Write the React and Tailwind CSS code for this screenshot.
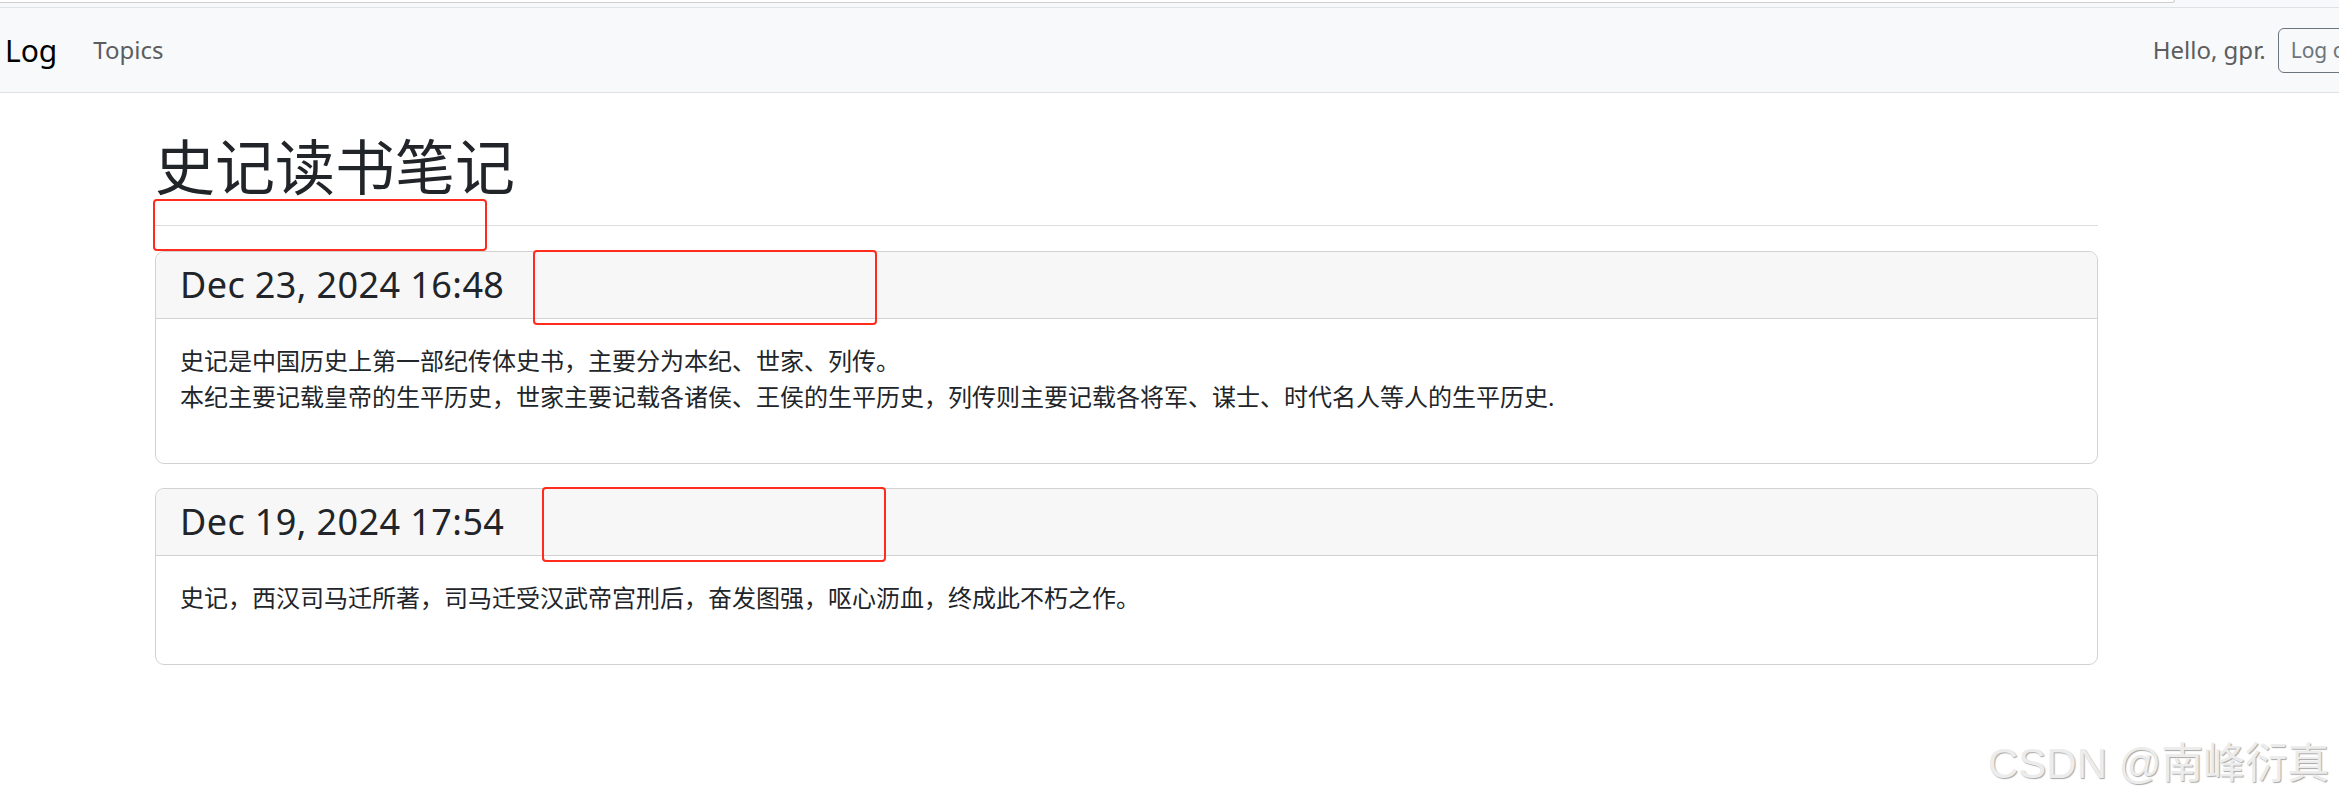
const font = "font-['Noto_Sans','Noto_Sans_CJK_SC',sans-serif]"

const entries = [
  {
    id: 1,
    date: 'Dec 23, 2024 16:48',
    lines: [
      '史记是中国历史上第一部纪传体史书，主要分为本纪、世家、列传。',
      '本纪主要记载皇帝的生平历史，世家主要记载各诸侯、王侯的生平历史，列传则主要记载各将军、谋士、时代名人等人的生平历史.',
    ],
    mark: 'left-[377px] w-[344px]',
  },
  {
    id: 2,
    date: 'Dec 19, 2024 17:54',
    lines: [
      '史记，西汉司马迁所著，司马迁受汉武帝宫刑后，奋发图强，呕心沥血，终成此不朽之作。',
    ],
    mark: 'left-[386px] w-[344px]',
  },
]

function Navbar() {
  return (
    <div>
      <div className="h-[7px] bg-[#f8f9fa]">
        <div className="h-[3px] w-[2175px] rounded-br-[8px] border-r border-b border-[#cfcfcf] bg-white" />
      </div>
      <nav className="flex h-[86px] items-center border-t border-b border-[#dee2e6] bg-[#f8f9fa]">
        <a className="ml-[5px] mr-[24px] text-[30px] leading-[45px] text-black">
          Log
        </a>
        <a className="px-[12px] text-[24px] leading-[36px] text-[#5c5d5e]">
          Topics
        </a>

        {/* the log out button runs off the right edge, as in the screenshot */}
        <div className="ml-auto mr-[-40px] flex shrink-0 items-center gap-[12px]">
          <span className="whitespace-nowrap text-[24px] leading-[36px] text-[#5c5d5e]">
            Hello, gpr.
          </span>
          <button className="h-[45px] whitespace-nowrap rounded-[6px] border border-[#6c757d] px-[12px] text-[21px] leading-[31px] text-[#6c757d]">
            Log out
          </button>
        </div>
      </nav>
    </div>
  )
}

function EntryCard({ entry }) {
  return (
    <div className="relative mb-[24px] rounded-[9px] border border-[#d2d2d2] bg-white">
      <h4 className="rounded-t-[9px] border-b border-[#d2d2d2] bg-[#f7f7f7] px-[24px] py-[12px] text-[36px] leading-[42px] tracking-[0.4px] text-[#212529]">
        {entry.date}
      </h4>

      <div className="p-[24px]">
        <p className="mb-[24px] text-[24px] leading-[36px] text-[#212529]">
          {entry.lines.map((line, i) => (
            <span key={i}>
              {i > 0 && <br />}
              {line}
            </span>
          ))}
        </p>
      </div>

      <div
        className={`absolute top-[-2px] h-[75px] rounded-[4px] border-2 border-[#ff2b1c] ${entry.mark}`}
      />
    </div>
  )
}

export default function App() {
  return (
    <div className={`relative min-h-[810px] w-full overflow-hidden bg-white ${font}`}>
      <Navbar />

      <main className="ml-[155px] mt-[38px] w-[1943px]">
        <div className="relative mb-[25px] border-b border-[#dddddd] pb-[22px]">
          <h1 className="text-[60px] leading-[72px] text-[#212529]">
            史记读书笔记
          </h1>
          <div className="absolute left-[-2px] top-[68px] h-[52px] w-[334px] rounded-[4px] border-2 border-[#ff2b1c]" />
        </div>

        {entries.map((entry) => (
          <EntryCard key={entry.id} entry={entry} />
        ))}
      </main>

      <div className="absolute left-[1988px] top-[738px] font-['Liberation_Sans','Noto_Sans_CJK_SC',sans-serif] text-[42px] leading-[52px] text-[#ececec] [text-shadow:1px_1px_1px_rgba(0,0,0,0.35)]">
        CSDN @南峰衍真
      </div>
    </div>
  )
}
